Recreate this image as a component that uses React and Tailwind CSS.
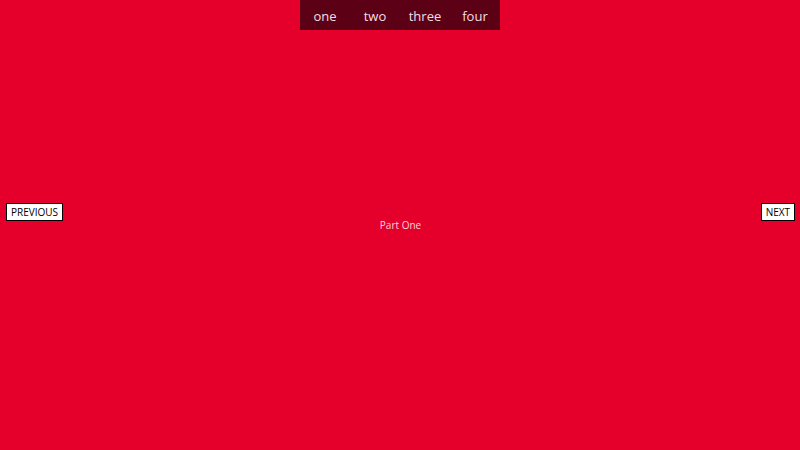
export default function App() {
  const tabs = ['one', 'two', 'three', 'four']

  return (
    <div className="h-[450px] w-full flex flex-col bg-[#e4002b] overflow-hidden" style={{ fontFamily: '"Open Sans", "Noto Sans", sans-serif' }}>
      <nav className="self-center flex h-[30px] w-[200px] bg-[#5c0016]">
        {tabs.map(t => (
          <div key={t} className="w-[50px] flex items-center justify-center pt-[4px] text-[13px] text-[#f3dfe3]">
            {t}
          </div>
        ))}
      </nav>

      <div className="mt-[173px] grid grid-cols-[1fr_auto_1fr] items-start pl-[6px] pr-[5px]">
        <button className="justify-self-start h-[18px] px-[4px] bg-white border border-black text-[10px] leading-none text-black">
          PREVIOUS
        </button>
        <div className="mt-[15px] text-[10px] text-[#f9d3d9]">Part One</div>
        <button className="justify-self-end h-[18px] px-[4px] bg-white border border-black text-[10px] leading-none text-black">
          NEXT
        </button>
      </div>
    </div>
  )
}
